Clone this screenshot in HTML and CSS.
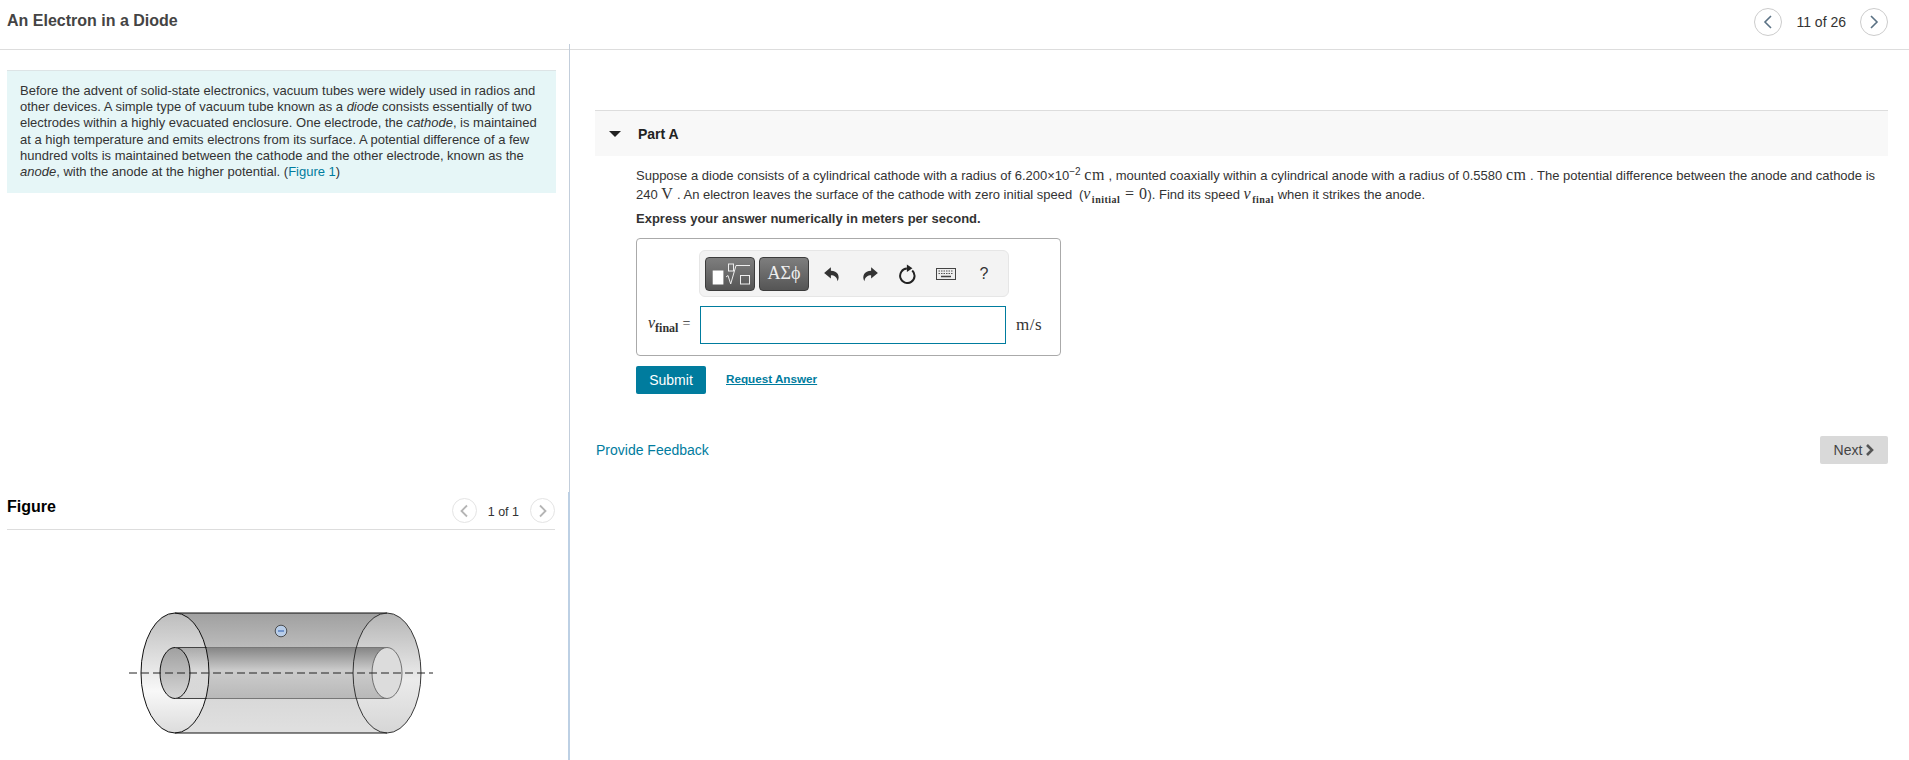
FILE: index.html
```html
<!DOCTYPE html>
<html lang="en">
<head>
    <meta charset="UTF-8">
    <title>An Electron in a Diode</title>
    <link rel="stylesheet" href="styles.css">
</head>
<body>
    <header class="top-bar">
        <h1>An Electron in a Diode</h1>
        <div class="pager">
            <span class="circle"><svg width="12" height="16" viewBox="0 0 12 16"><path d="M9 2 L3 8 L9 14" class="chev"/></svg></span>
            <span class="pager-text">11 of 26</span>
            <span class="circle"><svg width="12" height="16" viewBox="0 0 12 16"><path d="M3 2 L9 8 L3 14" class="chev"/></svg></span>
        </div>
    </header>

    <main class="columns">
        <section class="left">
            <div class="left-top">
                <div class="intro">
                    Before the advent of solid-state electronics, vacuum tubes were widely used in radios and other devices. A simple type of vacuum tube known as a <em>diode</em> consists essentially of two electrodes within a highly evacuated enclosure. One electrode, the <em>cathode</em>, is maintained at a high temperature and emits electrons from its surface. A potential difference of a few hundred volts is maintained between the cathode and the other electrode, known as the <em>anode</em>, with the anode at the higher potential. (<a href="#">Figure 1</a>)
                </div>
            </div>
            <div class="left-bottom">
                <div class="figure-head">
                    <h2>Figure</h2>
                    <div class="pager small">
                        <span class="circle off"><svg width="10" height="14" viewBox="0 0 10 14"><path d="M8 1.5 L2.5 7 L8 12.500" class="chev"/></svg></span>
                        <span class="pager-text">1 of 1</span>
                        <span class="circle off"><svg width="10" height="14" viewBox="0 0 10 14"><path d="M2 1.5 L7.500 7 L2 12.500" class="chev"/></svg></span>
                    </div>
                </div>
                <svg class="diagram" width="320" height="140" viewBox="0 0 320 140">
                    <defs>
                        <linearGradient id="outer" x1="0" y1="0" x2="0" y2="1">
                            <stop offset="0" stop-color="#a0a0a0"/>
                            <stop offset="0.55" stop-color="#d4d4d4"/>
                            <stop offset="1" stop-color="#e0e0e0"/>
                        </linearGradient>
                        <linearGradient id="inner" x1="0" y1="0" x2="0" y2="1">
                            <stop offset="0" stop-color="#858585"/>
                            <stop offset="0.45" stop-color="#cccccc"/>
                            <stop offset="1" stop-color="#b8b8b8"/>
                        </linearGradient>
                        <linearGradient id="face" x1="0" y1="0" x2="0" y2="1">
                            <stop offset="0" stop-color="#bdbdbd"/>
                            <stop offset="0.65" stop-color="#f8f8f8"/>
                            <stop offset="1" stop-color="#dcdcdc"/>
                        </linearGradient>
                        <linearGradient id="far" x1="0" y1="0" x2="0" y2="1">
                            <stop offset="0" stop-color="#b4b4b4"/>
                            <stop offset="0.55" stop-color="#ebebeb"/>
                            <stop offset="1" stop-color="#d6d6d6"/>
                        </linearGradient>
                        <linearGradient id="hole" x1="0" y1="0" x2="0" y2="1">
                            <stop offset="0" stop-color="#a0a0a0"/>
                            <stop offset="1" stop-color="#d6d6d6"/>
                        </linearGradient>
                        <clipPath id="face-clip">
                            <ellipse cx="46" cy="64" rx="34" ry="60"/>
                        </clipPath>
                    </defs>
                    <rect x="46" y="4" width="212" height="120" fill="url(#outer)"/>
                    <ellipse cx="258" cy="64" rx="34" ry="60" fill="url(#far)"/>
                    <rect x="46" y="38.500" width="212" height="51" fill="url(#inner)"/>
                    <ellipse cx="258" cy="64" rx="15" ry="25.500" fill="#dcdcdc" stroke="#555" stroke-width="0.8"/>
                    <ellipse cx="46" cy="64" rx="34" ry="60" fill="url(#face)"/>
                    <rect x="46" y="38.500" width="34" height="51" fill="url(#inner)" opacity="0.55" clip-path="url(#face-clip)"/>
                    <ellipse cx="46" cy="64" rx="15" ry="25.500" fill="url(#hole)" stroke="#111" stroke-width="1"/>
                    <path d="M46 38.500 H258 M46 89.500 H258" stroke="#777" stroke-width="1.200" fill="none"/>
                    <path d="M46 38.500 H78 M46 89.500 H78" stroke="#444" stroke-width="1" fill="none"/>
                    <path d="M46 4 H258 M46 124 H258" stroke="#111" stroke-width="1" fill="none"/>
                    <ellipse cx="46" cy="64" rx="34" ry="60" fill="none" stroke="#111" stroke-width="1"/>
                    <ellipse cx="258" cy="64" rx="34" ry="60" fill="none" stroke="#222" stroke-width="0.900"/>
                    <path d="M0 64 H304" stroke="#222" stroke-width="1" stroke-dasharray="8 4" fill="none"/>
                    <circle cx="152" cy="22" r="5.800" fill="#b8cde8" stroke="#333" stroke-width="0.800"/>
                    <path d="M149 22 H155" stroke="#2a5cb0" stroke-width="1"/>
                </svg>
            </div>
        </section>

        <section class="right">
            <div class="part-bar">
                <span class="caret"></span>
                <span class="part-name">Part A</span>
            </div>
            <div class="part-body">
                <p class="question">Suppose a diode consists of a cylindrical cathode with a radius of 6.200×10<sup>−2</sup> <span class="math">cm</span> , mounted coaxially within a cylindrical anode with a radius of 0.5580 <span class="math">cm</span> . The potential difference between the anode and cathode is 240 <span class="math">V</span> . An electron leaves the surface of the cathode with zero initial speed <span class="speed">(<span class="math"><i>v</i><sub>initial</sub> = 0</span>).</span> Find its speed <span class="math"><i>v</i><sub>final</sub></span> when it strikes the anode.</p>
                <p class="instruction">Express your answer numerically in meters per second.</p>

                <div class="answer-box">
                    <div class="toolbar">
                        <span class="tool-btn">
                            <svg width="46" height="30" viewBox="0 0 46 30">
                                <rect x="5.700" y="11.500" width="10.700" height="14" fill="#fff"/>
                                <rect x="21.500" y="5" width="5" height="7" fill="none" stroke="#eee" stroke-width="1"/>
                                <path d="M19 18 L21 16.500 L23.700 25 L29 6.500 H43" fill="none" stroke="#eee" stroke-width="1"/>
                                <rect x="33.500" y="16.500" width="9" height="8.500" fill="none" stroke="#eee" stroke-width="1"/>
                            </svg>
                        </span>
                        <span class="tool-btn greek">ΑΣϕ</span>
                        <span class="tool-icons">
                            <svg width="18" height="18" viewBox="0 0 16 16"><path d="M7 2 L1 7 L7 12 V9 C10 9 12.500 10.500 13 14.500 C15.500 9.500 13 5.200 7 5 Z" fill="#333"/></svg>
                            <svg width="18" height="18" viewBox="0 0 16 16"><path d="M9 2 L15 7 L9 12 V9 C6 9 3.500 10.500 3 14.500 C0.500 9.500 3 5.200 9 5 Z" fill="#333"/></svg>
                            <svg width="20" height="20" viewBox="0 0 18 18"><path d="M12.800 5.800 A6.500 6.500 0 1 1 8 4.100" fill="none" stroke="#222" stroke-width="1.800"/><path d="M8 0.500 L13 3.800 L8 7.200 Z" fill="#222"/></svg>
                            <svg width="20" height="12" viewBox="0 0 20 12"><rect x="0.500" y="0.500" width="19" height="11" fill="#eee" stroke="#444"/><path d="M2.500 3 H17.500 M2.500 5.500 H17.500" stroke="#555" stroke-width="1.200" stroke-dasharray="1.500 1"/><path d="M5 8.500 H15" stroke="#444" stroke-width="1.500"/></svg>
                            <span class="help">?</span>
                        </span>
                    </div>
                    <div class="answer-row">
                        <span class="answer-label"><i>v</i><sub>final</sub> <span class="eq">=</span></span>
                        <input class="answer-input" type="text">
                        <span class="unit">m/s</span>
                    </div>
                </div>

                <div class="actions">
                    <button class="submit">Submit</button>
                    <a class="request" href="#">Request Answer</a>
                </div>
            </div>
            <div class="part-foot">
                <a class="feedback" href="#">Provide Feedback</a>
                <span class="next">Next <svg width="9" height="12" viewBox="0 0 9 12"><path d="M2 1 L7 6 L2 11" fill="none" stroke="#555" stroke-width="2.600"/></svg></span>
            </div>
        </section>
    </main>
</body>
</html>
```

FILE: styles.css
```css
html, body {
    margin: 0;
    padding: 0;
    height: 760px;
    overflow: hidden;
}
body {
    font-family: "Liberation Sans", Arial, sans-serif;
    font-size: 14px;
    color: #333;
    background: #fff;
}
a {
    color: #007c9e;
    text-decoration: none;
}

.top-bar {
    height: 49px;
    border-bottom: 1px solid #ddd;
    display: flex;
    justify-content: space-between;
    align-items: center;
    padding: 0 21px 0 7px;
}
.top-bar h1 {
    margin: 0 0 8px;
    font-size: 16px;
    color: #444;
}
.pager {
    display: flex;
    align-items: center;
    gap: 14px;
    margin-bottom: 6px;
}
.circle {
    width: 26px;
    height: 26px;
    border: 1px solid #ccc;
    border-radius: 50%;
    display: flex;
    align-items: center;
    justify-content: center;
}
.chev {
    fill: none;
    stroke: #5a7184;
    stroke-width: 1.600;
}
.circle.off {
    width: 23px;
    height: 23px;
    border-color: #e4e4e4;
}
.circle.off .chev {
    stroke: #b5b5b5;
    stroke-width: 1.800;
}
.pager.small {
    gap: 11px;
    margin: 0;
}
.pager.small .pager-text {
    font-size: 12.500px;
    padding-top: 3px;
}

.columns {
    display: flex;
    height: 710px;
}
.left {
    width: 570px;
    flex: none;
    margin-top: -6px;
    display: flex;
    flex-direction: column;
}
.left-top {
    height: 448px;
    flex: none;
    border-right: 1px solid #c3cedb;
    box-sizing: border-box;
    padding: 26px 13px 0 7px;
}
.left-bottom {
    flex: 1;
    border-right: 2px solid #bdd0e4;
    padding: 0 13px 0 7px;
}
.intro {
    background: #e6f6f7;
    border-top: 1px solid #dde4e6;
    padding: 12px 16px 13px 13px;
    font-size: 13px;
    line-height: 16.2px;
    color: #333;
}

.figure-head {
    display: flex;
    justify-content: space-between;
    align-items: flex-start;
    height: 31px;
    padding-top: 6px;
    border-bottom: 1px solid #ddd;
}
.figure-head h2 {
    margin: 0;
    font-size: 16px;
    color: #000;
    padding-top: 0;
}
.diagram {
    display: block;
    margin: 79px 0 0 122px;
}

.right {
    flex: 1;
    padding: 60px 21px 0 25px;
}
.part-bar {
    height: 45px;
    border-top: 1px solid #ddd;
    background: #f8f8f8;
    display: flex;
    align-items: center;
}
.caret {
    width: 0;
    height: 0;
    border-left: 6px solid transparent;
    border-right: 6px solid transparent;
    border-top: 6px solid #222;
    margin: 0 17px 0 14px;
}
.part-name {
    font-weight: bold;
    font-size: 14px;
    color: #222;
}
.part-body {
    padding-left: 41px;
}
.question {
    margin: 11px 0 0;
    line-height: 18.5px;
    font-size: 13px;
}
.question sup, .question sub {
    font-size: 10px;
    line-height: 0;
}
.math {
    font-family: "Liberation Serif", serif;
    font-size: 16px;
    letter-spacing: 0.5px;
    line-height: 0;
}
.math i {
    padding-right: 1px;
}
.math sub {
    font-family: "Liberation Serif", serif;
    font-weight: bold;
    letter-spacing: 0.5px;
}
.speed {
    margin-left: 3px;
}
.instruction {
    margin: 6px 0 0;
    font-size: 13px;
    font-weight: bold;
    line-height: 18px;
}

.answer-box {
    width: 423px;
    height: 116px;
    margin-top: 10px;
    border: 1px solid #aaa;
    border-radius: 4px;
}
.toolbar {
    width: 310px;
    height: 47px;
    margin: 11px 0 0 62px;
    background: #f3f3f3;
    border: 1px solid #e6e6e6;
    border-radius: 6px;
    display: flex;
    align-items: center;
    padding-left: 5px;
    box-sizing: border-box;
    gap: 4px;
}
.tool-btn {
    width: 48px;
    height: 32px;
    border: 1px solid #3c3c3c;
    border-radius: 4px;
    background: linear-gradient(#7e7e7e, #555);
    display: flex;
    align-items: center;
    justify-content: center;
}
.greek {
    font-family: "Liberation Serif", serif;
    font-size: 18px;
    color: #eee;
}
.tool-icons {
    display: grid;
    grid-template-columns: repeat(5, 38px);
    justify-items: center;
    align-items: center;
}
.help {
    font-size: 16px;
    color: #333;
}
.answer-row {
    display: flex;
    align-items: center;
    margin-top: 9px;
}
.answer-label {
    width: 52px;
    margin-left: 11px;
    font-family: "Liberation Serif", serif;
    font-size: 16px;
    color: #333;
}
.answer-label sub {
    font-size: 12px;
    font-weight: bold;
}
.eq {
    font-size: 14px;
}
.answer-input {
    width: 306px;
    height: 38px;
    box-sizing: border-box;
    border: 1px solid #007c9e;
    padding: 0;
    outline: none;
}
.unit {
    margin-left: 10px;
    font-family: "Liberation Serif", serif;
    font-size: 17px;
    letter-spacing: 0.5px;
}
.actions {
    display: flex;
    align-items: center;
    margin-top: 10px;
}
.submit {
    width: 70px;
    height: 28px;
    background: #007c9e;
    color: #fff;
    border: none;
    border-radius: 2px;
    font-family: "Liberation Sans", Arial, sans-serif;
    font-size: 14px;
    padding: 0;
}
.request {
    margin: 0 0 3px 20px;
    font-size: 11.700px;
    font-weight: bold;
    text-decoration: underline;
}
.part-foot {
    display: flex;
    justify-content: space-between;
    align-items: center;
    margin-top: 42px;
    padding-left: 1px;
}
.feedback {
    font-size: 14px;
}
.next {
    width: 68px;
    height: 28px;
    box-sizing: border-box;
    background: #d9d9d9;
    border-radius: 2px;
    display: flex;
    align-items: center;
    justify-content: center;
    gap: 3px;
    font-size: 14px;
    color: #444;
}
```
